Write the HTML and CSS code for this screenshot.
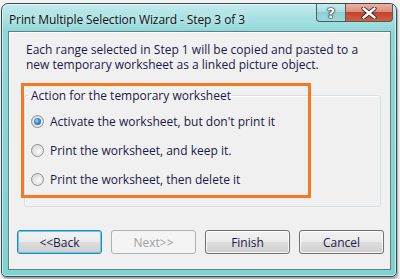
FILE: index.html
```html
<!DOCTYPE html>
<html>
<head>
<meta charset="utf-8">
<link rel="stylesheet" href="styles.css">
</head>
<body>
<div class="window">
  <div class="titlebar">
    <div class="title">Print Multiple Selection Wizard - Step 3 of 3</div>
    <div class="controls">
      <div class="cbtn help">?</div>
      <div class="cbtn close">
        <svg width="16" height="12" viewBox="0 0 16 12"><path d="M2.5 1.5 L13.5 10.5 M13.5 1.5 L2.5 10.5" stroke="#3b2a2a" stroke-width="4.2" stroke-linecap="round"/><path d="M2.5 1.5 L13.5 10.5 M13.5 1.5 L2.5 10.5" stroke="#fff" stroke-width="2.4" stroke-linecap="round"/></svg>
      </div>
    </div>
  </div>
  <div class="client">
    <p class="intro">Each range selected in Step 1 will be copied and pasted to a new temporary worksheet as a linked picture object.</p>
    <fieldset class="group">
      <legend>Action for the temporary worksheet</legend>
      <div class="opt"><span class="radio on"></span><span>Activate the worksheet, but don't print it</span></div>
      <div class="opt"><span class="radio"></span><span>Print the worksheet, and keep it.</span></div>
      <div class="opt"><span class="radio"></span><span>Print the worksheet, then delete it</span></div>
    </fieldset>
    <div class="highlight"></div>
    <div class="buttons">
      <div class="btn default">&lt;&lt;Back</div>
      <div class="btn disabled">Next&gt;&gt;</div>
      <div class="btn">Finish</div>
      <div class="btn">Cancel</div>
    </div>
  </div>
</div>
</body>
</html>
```
FILE: styles.css
```css
html, body { margin: 0; padding: 0; }
body {
  background: #f3f3f3;
  width: 400px; height: 279px; overflow: hidden;
  font-family: "Open Sans", "Noto Sans", sans-serif;
  font-size: 12px;
}
.window {
  box-sizing: border-box;
  width: 396px; height: 274px;
  margin: 3px 0 0 1px;
  border: 1px solid #3c4b4d;
  border-radius: 7px 7px 5px 5px;
  background: linear-gradient(#c4ecee 0px, #a7e0e2 14px, #8fd8d8 28px, #7dd3d1 100%);
  box-shadow: inset 0 0 0 1px rgba(255,255,255,0.55), 1px 2px 2px rgba(0,0,0,0.35);
  display: flex; flex-direction: column;
}
.titlebar {
  height: 27px;
  display: flex; justify-content: space-between; align-items: flex-start;
}
.title {
  margin: 7px 0 0 7px;
  font-family: "Open Sans", sans-serif;
  font-size: 12px; color: #111;
  letter-spacing: -0.1px;
  text-shadow: 0 0 6px rgba(255,255,255,0.9);
}
.controls { display: flex; margin-right: 3px; }
.cbtn {
  box-sizing: border-box; height: 18px;
  border: 1px solid #4c5e60; border-top: none;
  display: flex; align-items: center; justify-content: center;
}
.help {
  width: 29px; border-right: none;
  border-bottom-left-radius: 4px;
  background: linear-gradient(#c9ecee 0%, #a9dde0 45%, #8ccfd2 50%, #9fd8dc 100%);
  color: #fff; font-weight: bold; font-size: 14px;
  font-family: "DejaVu Sans", sans-serif;
  text-shadow: 0 0 1px #222, 0 0 1px #222, 0 0 1px #222, 0 0 2px #333;
}
.close {
  width: 48px;
  border-bottom-right-radius: 4px;
  background: linear-gradient(#eab1a3 0%, #db8f7c 45%, #c5432c 50%, #d25f42 100%);
}
.client {
  flex: 1;
  position: relative;
  margin: 0 5px 6px 6px;
  border: 1px solid #5e8387;
  background: #f0f0f0;
  box-shadow: inset 1px 1px 0 #fff;
  display: flex; flex-direction: column;
  color: #1a1a48;
}
.intro {
  margin: 10px 20px 0 17px;
  line-height: 15px;
}
.group {
  margin: 16px 9px 0 15px;
  padding: 4px 0 12px 6px;
  border: 1px solid #d6dfe5;
  border-radius: 3px;
  box-shadow: inset 1px 1px 0 #fff;
}
.group legend { padding: 0 1px 0 3px; margin-left: -3px; line-height: 15px; }
.opt {
  display: flex; align-items: center; gap: 6px;
  height: 29px;
}
.radio {
  box-sizing: border-box;
  width: 13px; height: 13px; border-radius: 50%;
  border: 1px solid #8d9092;
  background: radial-gradient(circle at 60% 60%, #f8f8f8 0, #e3e3e3 55%, #cfcfcf 100%);
  display: flex; align-items: center; justify-content: center;
}
.radio.on::after {
  content: ""; width: 7px; height: 7px; border-radius: 50%;
  background: radial-gradient(circle at 40% 40%, #9fd6f5 0, #2f8fcf 45%, #1a4f8a 100%);
}
.highlight {
  position: absolute;
  left: 12px; top: 51px; width: 290px; height: 115px;
  box-sizing: border-box;
  border: 3px solid #f47a22;
}
.buttons {
  display: flex; gap: 9px;
  margin: 23px 0 0 8px;
}
.btn {
  box-sizing: border-box;
  width: 85px; height: 24px;
  border: 1px solid #707070; border-radius: 3px;
  background: linear-gradient(#f2f2f2 0%, #ebebeb 48%, #dddddd 52%, #cfcfcf 100%);
  box-shadow: inset 0 0 0 1px rgba(255,255,255,0.8);
  display: flex; align-items: center; justify-content: center;
  color: #1a1a48;
}
.btn.default { border-color: #3c7fb1; box-shadow: inset 0 0 0 1px #48d5fb; }
.btn.disabled { border-color: #adb2b5; background: #f4f4f4; color: #a0a0a0; box-shadow: none; }
```
